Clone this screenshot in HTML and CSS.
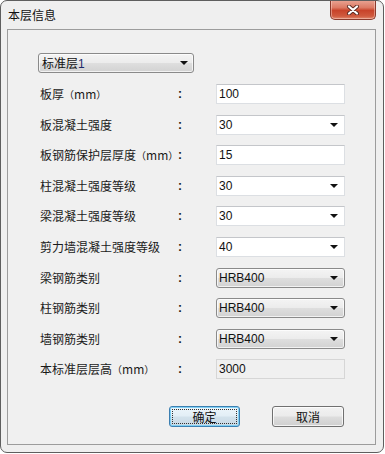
FILE: index.html
```html
<!DOCTYPE html>
<html lang="zh-CN">
<head>
<meta charset="utf-8">
<title>本层信息</title>
<link rel="stylesheet" href="styles.css">
</head>
<body>
<div class="window">
  <div class="titlebar">
    <span class="title">本层信息</span>
    <div class="close">
      <svg width="14" height="10" viewBox="0 0 14 10">
        <path d="M3 1.5 L11 8.5 M11 1.5 L3 8.5" stroke="#5a2a22" stroke-width="4" stroke-linecap="round"/>
        <path d="M3 1.5 L11 8.5 M11 1.5 L3 8.5" stroke="#ffffff" stroke-width="2.2" stroke-linecap="round"/>
      </svg>
    </div>
  </div>
  <div class="panel">
    <div class="combo combo-btn combo-floor">
      <span class="val cjk">标准层<span class="num">1</span></span>
      <span class="arrow"></span>
    </div>
    <div class="form">
      <div class="row"><span class="label">板厚<span class="paren">（</span>mm<span class="paren">）</span></span><span class="colon">:</span><div class="field edit"><span class="val">100</span></div></div>
      <div class="row"><span class="label">板混凝土强度</span><span class="colon">:</span><div class="field edit"><span class="val">30</span><span class="arrow"></span></div></div>
      <div class="row"><span class="label">板钢筋保护层厚度<span class="paren">（</span>mm<span class="paren">）</span></span><span class="colon">:</span><div class="field edit"><span class="val">15</span></div></div>
      <div class="row"><span class="label">柱混凝土强度等级</span><span class="colon">:</span><div class="field edit"><span class="val">30</span><span class="arrow"></span></div></div>
      <div class="row"><span class="label">梁混凝土强度等级</span><span class="colon">:</span><div class="field edit"><span class="val">30</span><span class="arrow"></span></div></div>
      <div class="row"><span class="label">剪力墙混凝土强度等级</span><span class="colon">:</span><div class="field edit"><span class="val">40</span><span class="arrow"></span></div></div>
      <div class="row"><span class="label">梁钢筋类别</span><span class="colon">:</span><div class="field combo-btn"><span class="val">HRB400</span><span class="arrow"></span></div></div>
      <div class="row"><span class="label">柱钢筋类别</span><span class="colon">:</span><div class="field combo-btn"><span class="val">HRB400</span><span class="arrow"></span></div></div>
      <div class="row"><span class="label">墙钢筋类别</span><span class="colon">:</span><div class="field combo-btn"><span class="val">HRB400</span><span class="arrow"></span></div></div>
      <div class="row"><span class="label">本标准层层高<span class="paren">（</span>mm<span class="paren">）</span></span><span class="colon">:</span><div class="field disabled"><span class="val">3000</span></div></div>
    </div>
    <div class="buttons">
      <button class="btn btn-default"><span class="focus">确定</span></button>
      <button class="btn">取消</button>
    </div>
  </div>
</div>
</body>
</html>
```

FILE: styles.css
```css
* { box-sizing: border-box; }
html, body { margin: 0; padding: 0; background: #ffffff; }
body {
  font-family: "Noto Sans CJK SC", "Noto Sans", sans-serif;
  font-size: 12px;
  color: #1a1a1a;
}
.window {
  width: 384px;
  height: 453px;
  border: 1px solid #5e5e5e;
  border-radius: 7px;
  background: #efefef;
  overflow: hidden;
}
.titlebar {
  height: 28px;
  display: flex;
  align-items: center;
  padding-left: 7px;
}
.title {
  font-size: 12px;
  line-height: 14px;
  color: #111;
}
.close {
  margin-left: auto;
  margin-right: 7px;
  align-self: flex-start;
  margin-top: -1px;
  width: 46px;
  height: 20px;
  border: 1px solid #8a3a2c;
  border-top: none;
  border-radius: 0 0 5px 5px;
  background: linear-gradient(#eaa696 0%, #dc7a64 40%, #c8432a 55%, #d05a3e 85%, #e08a70 100%);
  box-shadow: inset 0 0 0 1px rgba(255, 220, 210, 0.45);
  display: flex;
  align-items: center;
  justify-content: center;
}
.close svg { display: block; margin-top: 1px; }
.panel {
  margin-left: 6px;
  width: 369px;
  height: 416px;
  border: 1px solid #9c9c9c;
  background: #f0f0f0;
  padding: 23px 0 0 30px;
}
.combo-floor {
  width: 156px;
  height: 20px;
}
.combo-btn {
  border: 1px solid #8a8a8a;
  border-radius: 3px;
  background: linear-gradient(#f4f4f4 0%, #ececec 48%, #dedede 52%, #d2d2d2 100%);
  box-shadow: inset 0 0 0 1px rgba(255, 255, 255, 0.7);
  display: flex;
  align-items: center;
  padding-left: 3px;
  padding-right: 5px;
}
.val {
  font-family: "Liberation Sans", Arial, sans-serif;
  font-size: 12px;
  line-height: 14px;
  color: #111;
  flex: 1;
}
.val.cjk {
  font-family: "Noto Sans CJK SC", sans-serif;
}
.num {
  font-family: "Liberation Sans", Arial, sans-serif;
  color: #1c2a6a;
}
.arrow {
  width: 0;
  height: 0;
  border-left: 4px solid transparent;
  border-right: 4px solid transparent;
  border-top: 4px solid #111;
}
.form {
  margin-top: 11px;
  display: flex;
  flex-direction: column;
  gap: 10.6px;
}
.row {
  height: 20px;
  display: flex;
  align-items: center;
}
.label {
  width: 140px;
  padding-left: 2px;
  white-space: nowrap;
  line-height: 16px;
}
.paren { font-size: 10px; }
.colon {
  width: 38px;
  font-family: "Liberation Sans", Arial, sans-serif;
  font-weight: bold;
  font-size: 12px;
}
.field {
  width: 129px;
  height: 20px;
  display: flex;
  align-items: center;
  padding-left: 2px;
  padding-right: 6px;
}
.field.combo-btn { padding-left: 2px; }
.edit {
  background: #ffffff;
  border: 1px solid #dcdfe3;
  border-top-color: #c4c6ca;
}
.disabled {
  background: #f0f0f0;
  border: 1px solid #d6d6d6;
}
.buttons {
  margin-top: 27px;
  padding-left: 131px;
  display: flex;
  gap: 32px;
}
.btn {
  width: 72px;
  height: 21px;
  border: 1px solid #707070;
  border-radius: 3px;
  background: linear-gradient(#f2f2f2 0%, #ebebeb 48%, #dddddd 52%, #cfcfcf 100%);
  box-shadow: inset 0 0 0 1px rgba(255, 255, 255, 0.75);
  font-family: "Noto Sans CJK SC", sans-serif;
  font-size: 12px;
  line-height: 14px;
  color: #111;
  padding: 0;
  display: flex;
  align-items: center;
  justify-content: center;
}
.btn-default {
  width: 71px;
  border-color: #3c7fb1;
  background: linear-gradient(#eef6fb 0%, #e2eef6 48%, #d3e2ec 52%, #c8d8e4 100%);
  box-shadow: inset 0 0 0 1px #7fd0f4;
  padding: 2px;
}
.focus {
  flex: 1;
  align-self: stretch;
  display: flex;
  align-items: center;
  justify-content: center;
  outline: 1px dotted #333;
  outline-offset: -1px;
}
```
